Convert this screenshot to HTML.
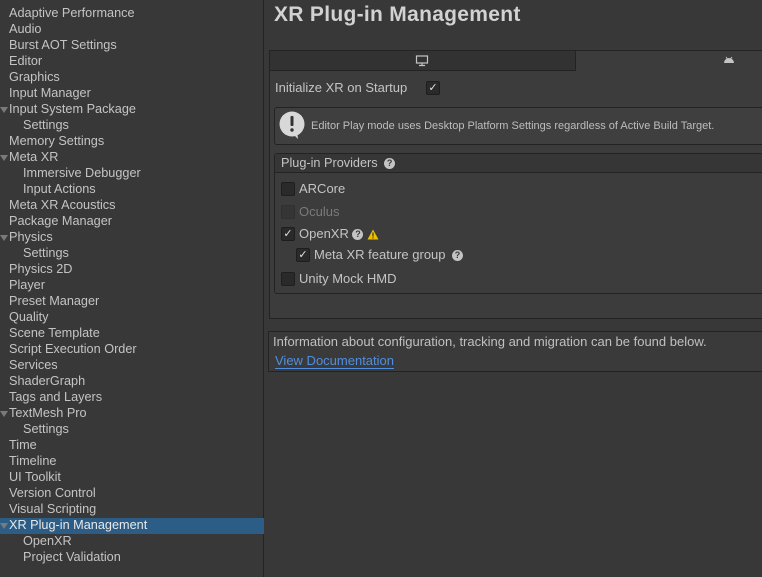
<!DOCTYPE html>
<html><head><style>
*{margin:0;padding:0;box-sizing:border-box}
body{width:762px;height:577px;background:#383838;font-family:"Liberation Sans",sans-serif;font-size:12.7px;color:#c4c4c4;position:relative;overflow:hidden}
.side{position:absolute;left:0;top:0;width:264px;height:577px;border-right:1px solid #232323}
.it{position:absolute;left:9px;height:16px;line-height:16px;white-space:nowrap}
.sub{left:23px}
.arr{position:absolute;left:0;width:0;height:0;border-left:4px solid transparent;border-right:4px solid transparent;border-top:6px solid #7a7a7a}
.sel{position:absolute;left:0;top:518px;width:264px;height:16px;background:#2c5d87}
.abs{position:absolute}
.cb{position:absolute;width:14px;height:14px;background:#2a2a2a;border:1px solid #1e1e1e;border-radius:2px;color:#e0e0e0;font-size:11px;line-height:12px;text-align:center}
.q{display:inline-block;width:11px;height:11px;border-radius:50%;background:#c4c4c4;color:#383838;font-size:9px;font-weight:bold;line-height:11px;text-align:center;vertical-align:middle}
.m{font-size:13px}
</style></head><body>
<div class="side">
<div class="sel"></div>
<div class="it" style="top:5px">Adaptive Performance</div>
<div class="it" style="top:21px">Audio</div>
<div class="it" style="top:37px">Burst AOT Settings</div>
<div class="it" style="top:53px">Editor</div>
<div class="it" style="top:69px">Graphics</div>
<div class="it" style="top:85px">Input Manager</div>
<div class="arr" style="top:107px"></div><div class="it" style="top:101px">Input System Package</div>
<div class="it sub" style="top:117px">Settings</div>
<div class="it" style="top:133px">Memory Settings</div>
<div class="arr" style="top:155px"></div><div class="it" style="top:149px">Meta XR</div>
<div class="it sub" style="top:165px">Immersive Debugger</div>
<div class="it sub" style="top:181px">Input Actions</div>
<div class="it" style="top:197px">Meta XR Acoustics</div>
<div class="it" style="top:213px">Package Manager</div>
<div class="arr" style="top:235px"></div><div class="it" style="top:229px">Physics</div>
<div class="it sub" style="top:245px">Settings</div>
<div class="it" style="top:261px">Physics 2D</div>
<div class="it" style="top:277px">Player</div>
<div class="it" style="top:293px">Preset Manager</div>
<div class="it" style="top:309px">Quality</div>
<div class="it" style="top:325px">Scene Template</div>
<div class="it" style="top:341px">Script Execution Order</div>
<div class="it" style="top:357px">Services</div>
<div class="it" style="top:373px">ShaderGraph</div>
<div class="it" style="top:389px">Tags and Layers</div>
<div class="arr" style="top:411px"></div><div class="it" style="top:405px">TextMesh Pro</div>
<div class="it sub" style="top:421px">Settings</div>
<div class="it" style="top:437px">Time</div>
<div class="it" style="top:453px">Timeline</div>
<div class="it" style="top:469px">UI Toolkit</div>
<div class="it" style="top:485px">Version Control</div>
<div class="it" style="top:501px">Visual Scripting</div>
<div class="arr" style="top:523px"></div><div class="it" style="top:517px;color:#e8e8e8">XR Plug-in Management</div>
<div class="it sub" style="top:533px">OpenXR</div>
<div class="it sub" style="top:549px">Project Validation</div>
</div>

<div class="abs" style="left:274px;top:3px;font-size:21px;font-weight:bold;color:#d2d2d2;letter-spacing:0.3px">XR Plug-in Management</div>

<div class="abs" style="left:269px;top:50px;width:500px;height:269px;border:1px solid #232323;background:#3c3c3c"></div>
<div class="abs" style="left:270px;top:51px;width:306px;height:20px;background:#323232;border-bottom:1px solid #232323;border-right:1px solid #232323"></div>
<svg class="abs" style="left:415px;top:55px" width="14" height="12" viewBox="0 0 14 12"><rect x="1.5" y="1" width="11" height="7" fill="none" stroke="#c4c4c4" stroke-width="1.2"/><path d="M7 8v2M4 10.5h6" stroke="#c4c4c4" stroke-width="1.2"/></svg>
<svg class="abs" style="left:723px;top:55px" width="12" height="10" viewBox="0 0 12 10"><path d="M1 8a5 5 0 0 1 10 0z" fill="#c4c4c4"/><path d="M3 2l1.5 2M9 2l-1.5 2" stroke="#c4c4c4"/></svg>

<div class="abs m" style="left:275px;top:80px">Initialize XR on Startup</div>
<div class="cb" style="left:426px;top:81px">✓</div>

<div class="abs" style="left:274px;top:107px;width:500px;height:38px;border:1px solid #232323;border-radius:3px;background:#3f3f3f"></div>
<svg class="abs" style="left:279px;top:111px" width="28" height="30" viewBox="0 0 28 30"><circle cx="13" cy="13" r="12.5" fill="#d8d8d8"/><path d="M13 22l6 6-1-8z" fill="#d8d8d8"/><rect x="11.5" y="5" width="3" height="10" rx="1" fill="#333"/><circle cx="13" cy="19" r="1.7" fill="#333"/></svg>
<div class="abs" style="left:311px;top:120px;font-size:11px;color:#bdbdbd">Editor Play mode uses Desktop Platform Settings regardless of Active Build Target.</div>

<div class="abs" style="left:274px;top:153px;width:500px;height:141px;border:1px solid #232323;border-radius:3px;background:#3c3c3c"></div>
<div class="abs" style="left:275px;top:154px;width:490px;height:19px;background:#363636;border-bottom:1px solid #232323"></div>
<div class="abs" style="left:281px;top:156px">Plug-in Providers <span class="q" style="margin-left:3px">?</span></div>
<div class="cb" style="left:281px;top:182px"></div><div class="abs m" style="left:299px;top:181px">ARCore</div>
<div class="cb" style="left:281px;top:205px;background:#353535;border-color:#303030"></div><div class="abs m" style="left:299px;top:204px;color:#7a7a7a">Oculus</div>
<div class="cb" style="left:281px;top:227px">✓</div><div class="abs m" style="left:299px;top:226px">OpenXR <span class="q">?</span></div>
<svg class="abs" style="left:367px;top:229px" width="12" height="11" viewBox="0 0 12 11"><path d="M6 0.5L11.5 10.5H0.5z" fill="#f0c000"/><rect x="5.4" y="3.5" width="1.2" height="4" fill="#333"/><rect x="5.4" y="8.3" width="1.2" height="1.2" fill="#333"/></svg>
<div class="cb" style="left:296px;top:248px">✓</div><div class="abs m" style="left:314px;top:247px">Meta XR feature group</div>
<span class="q abs" style="left:452px;top:250px">?</span>
<div class="cb" style="left:281px;top:272px"></div><div class="abs m" style="left:299px;top:271px">Unity Mock HMD</div>

<div class="abs" style="left:268px;top:331px;width:500px;height:41px;border:1px solid #232323;background:#3a3a3a"></div>
<div class="abs m" style="left:273px;top:334px;color:#c0c0c0">Information about configuration, tracking and migration can be found below.</div>
<div class="abs m" style="left:275px;top:354px;color:#4f8fe0;border-bottom:1px solid #4f8fe0;line-height:14px">View Documentation</div>
</body></html>
